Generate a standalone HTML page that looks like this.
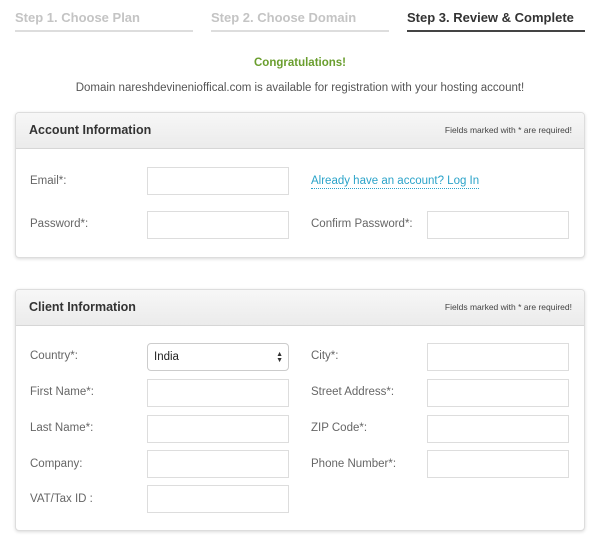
<!DOCTYPE html>
<html><head><style>
*{box-sizing:border-box;margin:0;padding:0}
body{width:600px;height:543px;background:#fff;font-family:"Liberation Sans",sans-serif;position:relative;overflow:hidden;color:#555}
.a{position:absolute}
.step{font-weight:bold;font-size:13px;color:#c4c4c4;padding-top:1px;border-bottom:2px solid #ddd;width:178px;top:9px;height:23px}
.panel{position:absolute;left:15px;width:570px;border:1px solid #ddd;border-radius:4px;box-shadow:0 1px 3px rgba(0,0,0,.15);background:#fff}
.hd{height:36px;background:linear-gradient(#f7f7f7,#ebebeb);border-bottom:1px solid #d6d6d6;position:relative;border-radius:4px 4px 0 0}
.hd b{position:absolute;left:13px;top:10px;font-size:12.5px;color:#333}
.hd span{position:absolute;right:12px;top:12px;font-size:8.5px;color:#444}
.lbl{position:absolute;font-size:11.5px;color:#666;margin-top:1px}
.in{position:absolute;width:142px;height:28px;border:1px solid #ddd;background:#fff}
</style></head><body>
<div class="a step" style="left:15px">Step 1. Choose Plan</div>
<div class="a step" style="left:211px">Step 2. Choose Domain</div>
<div class="a step" style="left:407px;color:#333;border-bottom-color:#444">Step 3. Review &amp; Complete</div>
<div class="a" style="top:57px;left:0;width:600px;text-align:center;font-size:11.5px;font-weight:bold;color:#6a9e2e">Congratulations!</div>
<div class="a" style="top:82px;left:0;width:600px;text-align:center;font-size:11.5px;color:#555">Domain nareshdevinenioffical.com is available for registration with your hosting account!</div>

<div class="panel" style="top:112px;height:146px"><div class="hd"><b>Account Information</b><span>Fields marked with * are required!</span></div></div>
<div class="lbl" style="left:30px;top:174px">Email*:</div>
<div class="in" style="left:147px;top:167px"></div>
<div class="a" style="left:311px;top:175px;font-size:11.5px;color:#2aa3c9;border-bottom:1px dotted #2aa3c9;line-height:13px">Already have an account? Log In</div>
<div class="lbl" style="left:30px;top:217px">Password*:</div>
<div class="in" style="left:147px;top:211px"></div>
<div class="lbl" style="left:311px;top:217px">Confirm Password*:</div>
<div class="in" style="left:427px;top:211px"></div>

<div class="panel" style="top:289px;height:242px"><div class="hd"><b>Client Information</b><span>Fields marked with * are required!</span></div></div>
<div class="lbl" style="left:30px;top:349px">Country*:</div>
<div class="in" style="left:147px;top:343px;border-color:#ccc;border-radius:4px;font-size:11.5px;color:#222;padding:7px 0 0 6px">India<span style="position:absolute;right:5px;top:8px;font-size:7px;line-height:6px;color:#333">▲<br>▼</span></div>
<div class="lbl" style="left:311px;top:349px">City*:</div>
<div class="in" style="left:427px;top:343px"></div>
<div class="lbl" style="left:30px;top:385px">First Name*:</div>
<div class="in" style="left:147px;top:379px"></div>
<div class="lbl" style="left:311px;top:385px">Street Address*:</div>
<div class="in" style="left:427px;top:379px"></div>
<div class="lbl" style="left:30px;top:421px">Last Name*:</div>
<div class="in" style="left:147px;top:415px"></div>
<div class="lbl" style="left:311px;top:421px">ZIP Code*:</div>
<div class="in" style="left:427px;top:415px"></div>
<div class="lbl" style="left:30px;top:457px">Company:</div>
<div class="in" style="left:147px;top:450px"></div>
<div class="lbl" style="left:311px;top:457px">Phone Number*:</div>
<div class="in" style="left:427px;top:450px"></div>
<div class="lbl" style="left:30px;top:492px">VAT/Tax ID :</div>
<div class="in" style="left:147px;top:485px"></div>
</body></html>
